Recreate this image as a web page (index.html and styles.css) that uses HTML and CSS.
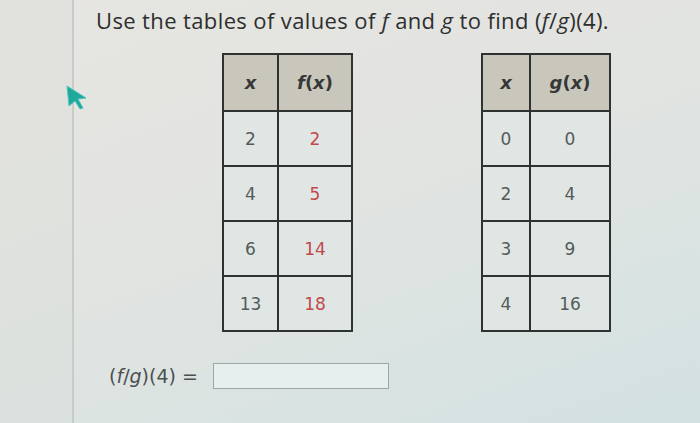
FILE: index.html
```html
<!DOCTYPE html>
<html>
<head>
<meta charset="utf-8">
<link rel="stylesheet" href="styles.css">
</head>
<body>
<div class="screen">
  <div class="sidebar"></div>
  <div class="main">
    <p class="prompt">Use the tables of values of <i>f</i> and <i>g</i> to find (<i>f</i>/<i>g</i>)(4).</p>
    <div class="tables">
      <table class="vt vt-f">
        <thead><tr><th class="c1"><i>x</i></th><th><i>f</i>(<i>x</i>)</th></tr></thead>
        <tbody>
          <tr><td>2</td><td class="red">2</td></tr>
          <tr><td>4</td><td class="red">5</td></tr>
          <tr><td>6</td><td class="red">14</td></tr>
          <tr><td>13</td><td class="red">18</td></tr>
        </tbody>
      </table>
      <table class="vt vt-g">
        <thead><tr><th class="c1"><i>x</i></th><th><i>g</i>(<i>x</i>)</th></tr></thead>
        <tbody>
          <tr><td>0</td><td>0</td></tr>
          <tr><td>2</td><td>4</td></tr>
          <tr><td>3</td><td>9</td></tr>
          <tr><td>4</td><td>16</td></tr>
        </tbody>
      </table>
    </div>
    <div class="answer">
      <span class="label">(<i>f</i>/<i>g</i>)(4) =</span>
      <span class="box"></span>
    </div>
  </div>
  <svg class="cursor" width="26" height="26" viewBox="0 0 26 26">
    <path d="M3 2 L22 14 L14 15 L19 24 L16 25 L11 17 L5 22 Z" fill="#1fa89c" stroke="#4fc6bb" stroke-width="1"/>
  </svg>
</div>
</body>
</html>
```
FILE: styles.css
```css
html, body { margin: 0; padding: 0; }
body {
  width: 700px;
  height: 423px;
  overflow: hidden;
  font-family: "DejaVu Sans", sans-serif;
}
.screen {
  position: relative;
  display: flex;
  width: 700px;
  height: 423px;
  background: linear-gradient(160deg, #e6e5e1 0%, #e2e4e1 45%, #d8e3e2 80%, #d3e1e1 100%);
}
.sidebar {
  width: 72px;
  flex: none;
  border-right: 2px solid #c6ccca;
  background: rgba(200, 205, 200, 0.15);
}
.main {
  flex: 1;
  padding-left: 22px;
}
.prompt {
  margin: 6px 0 0 0;
  font-family: "Open Sans", sans-serif;
  font-size: 22px;
  line-height: 28px;
  color: #2e2e2e;
  letter-spacing: 0.38px;
}
.tables {
  display: flex;
  margin-top: 19px;
  padding-left: 126px;
  gap: 128px;
}
.vt {
  border-collapse: collapse;
  font-size: 17px;
  color: #555a5a;
}
.vt th, .vt td {
  border: 2px solid #2e3230;
  text-align: center;
  padding: 0;
}
.vt th {
  background: #c9c7bc;
  height: 55px;
  font-weight: bold;
  color: #363838;
  font-size: 18px;
}
.vt td {
  background: #dfe6e4;
  height: 53px;
}
.vt-f .c1 { width: 53px; }
.vt-f th:last-child { width: 72px; }
.vt-g .c1 { width: 46px; }
.vt-g th:last-child { width: 78px; }
.red { color: #c2484b; }
.answer {
  display: flex;
  align-items: center;
  margin-top: 31px;
  padding-left: 13px;
  gap: 15px;
}
.label {
  font-size: 19px;
  color: #4b4f4f;
}
.box {
  width: 174px;
  height: 24px;
  border: 1px solid #9ea5a4;
  background: #e7eeee;
}
.cursor {
  position: absolute;
  left: 64px;
  top: 84px;
}
```
